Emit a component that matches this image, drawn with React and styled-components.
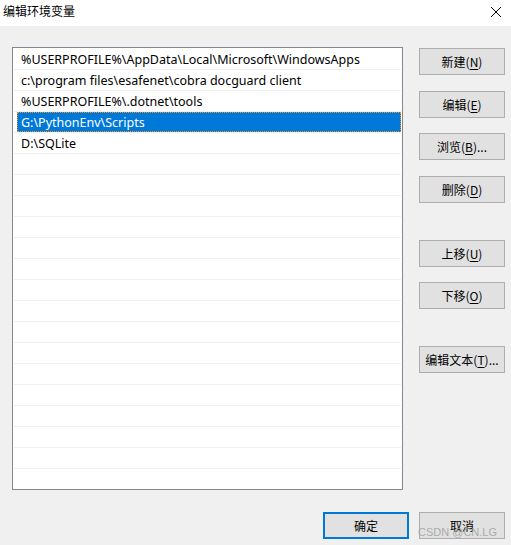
import styled, { createGlobalStyle } from "styled-components";

const GlobalStyle = createGlobalStyle`
  html, body {
    margin: 0;
    padding: 0;
    background: #f0f0f0;
  }
  body {
    font-family: "Noto Sans", "Noto Sans CJK SC", sans-serif;
    font-size: 12px;
    color: #000;
  }
`;

const paths = [
  "%USERPROFILE%\\AppData\\Local\\Microsoft\\WindowsApps",
  "c:\\program files\\esafenet\\cobra docguard client",
  "%USERPROFILE%\\.dotnet\\tools",
  "G:\\PythonEnv\\Scripts",
  "D:\\SQLite",
];

const ROWS = 21;

const Key = ({ label, hotkey, tail = "" }) => (
  <>
    {label}(<u>{hotkey}</u>){tail}
  </>
);

const App = () => {
  const selected = 3;
  const rows = Array.from({ length: ROWS }, (_, i) => paths[i] || "");

  return (
    <Window>
      <GlobalStyle />
      <TitleBar>
        <Title>编辑环境变量</Title>
        <CloseButton>
          <svg width="12" height="12" viewBox="0 0 12 12">
            <path d="M1 1 L11 11 M11 1 L1 11" stroke="#000" strokeWidth="1" />
          </svg>
        </CloseButton>
      </TitleBar>
      <Body>
        <Main>
          <PathList>
            {rows.map((p, i) => (
              <Row key={i}>
                <RowItem active={i === selected}>{p}</RowItem>
              </Row>
            ))}
          </PathList>
          <Side>
            <Button>
              <Key label="新建" hotkey="N" />
            </Button>
            <Button gap={16}>
              <Key label="编辑" hotkey="E" />
            </Button>
            <Button gap={15}>
              <Key label="浏览" hotkey="B" tail="..." />
            </Button>
            <Button gap={16}>
              <Key label="删除" hotkey="D" />
            </Button>
            <Button gap={37}>
              <Key label="上移" hotkey="U" />
            </Button>
            <Button gap={15}>
              <Key label="下移" hotkey="O" />
            </Button>
            <Button gap={37}>
              <Key label="编辑文本" hotkey="T" tail="..." />
            </Button>
          </Side>
        </Main>
        <Footer>
          <Button primary>确定</Button>
          <Button>取消</Button>
          <Watermark>CSDN @CN.LG</Watermark>
        </Footer>
      </Body>
    </Window>
  );
};

const Window = styled.div`
  width: 511px;
  height: 545px;
  display: flex;
  flex-direction: column;
  background: #f0f0f0;
  overflow: hidden;
`;

const TitleBar = styled.div`
  height: 26px;
  background: #fff;
  display: flex;
  align-items: center;
  justify-content: space-between;
  padding-left: 3px;
`;

const Title = styled.span`
  font-family: "Noto Sans CJK SC", sans-serif;
  font-size: 12px;
  line-height: 1;
  margin-top: -4px;
`;

const CloseButton = styled.div`
  width: 22px;
  height: 22px;
  display: flex;
  align-items: center;
  justify-content: center;
  margin-right: 4px;
  margin-top: -2px;
`;

const Body = styled.div`
  flex: 1;
  display: flex;
  flex-direction: column;
  position: relative;
`;

const Main = styled.div`
  display: flex;
  padding: 21px 0 0 12px;
`;

const PathList = styled.div`
  width: 387px;
  height: 440px;
  border: 1px solid #828790;
  background: #fff;
  padding: 1px 1px 0 1px;
  box-sizing: content-box;
  overflow: hidden;
`;

const Row = styled.div`
  height: 20px;
  border-bottom: 1px solid #f0f0f0;
  padding-left: 3px;
  display: flex;
`;

const RowItem = styled.div`
  flex: 1;
  display: flex;
  align-items: center;
  padding-left: 3px;
  white-space: nowrap;
  box-sizing: border-box;
  font-size: 12.5px;
  ${({ active }) =>
    active
      ? `background: #0078d7;
         color: #fff;
         border: 1px dotted #f7931e;`
      : `border: 1px solid transparent;`}
`;

const Side = styled.div`
  display: flex;
  flex-direction: column;
  margin-left: 16px;
  padding-top: 1px;
`;

const Button = styled.div`
  width: 86px;
  height: 27px;
  box-sizing: border-box;
  margin-top: ${({ gap }) => (gap ? `${gap}px` : 0)};
  background: #e1e1e1;
  border: ${({ primary }) =>
    primary ? "2px solid #0078d7" : "1px solid #adadad"};
  display: flex;
  align-items: center;
  justify-content: center;
  font-family: "Noto Sans CJK SC", sans-serif;
  font-size: 12px;
  white-space: nowrap;
  u {
    text-underline-offset: 2px;
  }
`;

const Footer = styled.div`
  margin-top: auto;
  display: flex;
  justify-content: flex-end;
  gap: 10px;
  padding: 0 6px 6px 0;
  position: relative;
`;

const Watermark = styled.span`
  position: absolute;
  right: 14px;
  bottom: 7px;
  font-family: "Liberation Sans", sans-serif;
  font-size: 11px;
  color: rgba(160, 160, 160, 0.85);
  pointer-events: none;
`;

export default App;
